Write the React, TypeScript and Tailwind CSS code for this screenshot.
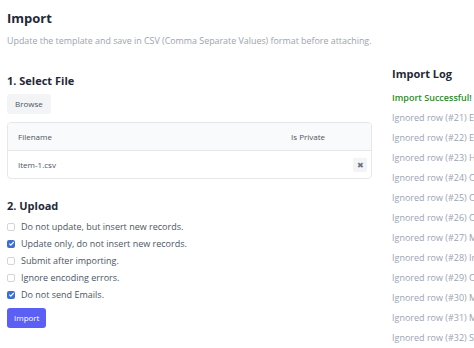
import React from 'react';

const options = [
  { label: 'Do not update, but insert new records.', checked: false },
  { label: 'Update only, do not insert new records.', checked: true },
  { label: 'Submit after importing.', checked: false },
  { label: 'Ignore encoding errors.', checked: false },
  { label: 'Do not send Emails.', checked: true },
];

const logRows = [
  'Ignored row (#21) Error: Duplicate entry',
  'Ignored row (#22) Error: Duplicate entry',
  'Ignored row (#23) Hmm, invalid value',
  'Ignored row (#24) Could not find item',
  'Ignored row (#25) Could not find item',
  'Ignored row (#26) Could not find item',
  'Ignored row (#27) Missing value',
  'Ignored row (#28) Invalid date',
  'Ignored row (#29) Could not find item',
  'Ignored row (#30) Missing value',
  'Ignored row (#31) Missing value',
  'Ignored row (#32) Something went wrong',
];

function Checkbox({ checked }: { checked: boolean }) {
  if (checked) {
    return (
      <span className="flex h-[8px] w-[8px] items-center justify-center rounded-[2px] bg-[#3b6fd6]">
        <svg viewBox="0 0 8 8" className="h-[7px] w-[7px]">
          <path d="M1.5 4.2 L3.2 5.8 L6.5 2.3" fill="none" stroke="white" strokeWidth="1.3" />
        </svg>
      </span>
    );
  }
  return <span className="h-[8px] w-[8px] rounded-[2px] border border-[#d1d5db] bg-white" />;
}

export default function App() {
  return (
    <div
      className="flex h-[348px] w-[474px] overflow-hidden bg-white text-[#374151]"
      style={{ fontFamily: '"Open Sans", "Noto Sans", sans-serif' }}
    >
      <div className="w-[372px] shrink-0 pl-[7px] pt-[9px]">
        <h1 className="text-[13px] font-bold leading-[18px] text-[#1f2937]">Import</h1>
        <p className="mt-[8px] whitespace-nowrap text-[8.9px] leading-[12px] text-[#9ca3af]">
          Update the template and save in CSV (Comma Separate Values) format before attaching.
        </p>

        <h2 className="mt-[26px] text-[11px] font-bold leading-[16px] text-[#1f2937]">1. Select File</h2>
        <button className="mt-[5px] h-[20px] rounded-[3px] bg-[#f3f4f6] px-[8px] text-[8px] text-[#4b5563]">
          Browse
        </button>

        <div className="mt-[8px] rounded-[4px] border border-[#e5e7eb]">
          <div className="flex h-[28px] items-center rounded-t-[4px] border-b border-[#e5e7eb] bg-[#f9fafb] px-[10px] text-[8px] text-[#4b5563]">
            <span className="flex-1">Filename</span>
            <span className="w-[70px]">Is Private</span>
          </div>
          <div className="flex h-[27px] items-center px-[10px] pr-[4px] text-[8px] text-[#4b5563]">
            <span className="flex-1">Item-1.csv</span>
            <span className="flex h-[14px] w-[14px] items-center justify-center rounded-[2px] bg-[#f3f4f6] text-[8px] text-[#6b7280]">
              ✖
            </span>
          </div>
        </div>

        <h2 className="mt-[19px] text-[11px] font-bold leading-[16px] text-[#1f2937]">2. Upload</h2>
        <div className="mt-[4px] flex flex-col">
          {options.map((o) => (
            <label key={o.label} className="flex h-[17px] items-center gap-[6px] text-[9px] text-[#4b5563]">
              <Checkbox checked={o.checked} />
              <span>{o.label}</span>
            </label>
          ))}
        </div>
        <button className="mt-[4px] h-[20px] rounded-[3px] bg-[#5b5ff5] px-[7px] text-[8px] text-white">
          Import
        </button>
      </div>

      <div className="ml-[20px] min-w-0 flex-1 pt-[66px]">
        <h2 className="text-[11px] font-bold leading-[16px] text-[#1f2937]">Import Log</h2>
        <div className="mt-[6px] whitespace-nowrap text-[9px] font-semibold leading-[20px] text-[#2e8b2e]">
          Import Successful!
        </div>
        {logRows.map((r) => (
          <div key={r} className="whitespace-nowrap text-[9px] leading-[20px] text-[#9ca3af]">
            {r}
          </div>
        ))}
      </div>
    </div>
  );
}
